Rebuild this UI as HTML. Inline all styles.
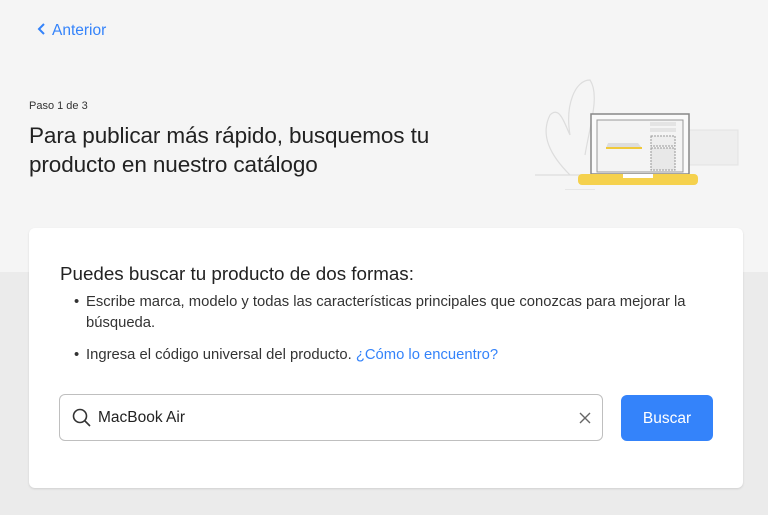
<!DOCTYPE html>
<html><head><meta charset="utf-8"><style>
*{margin:0;padding:0;box-sizing:border-box}
body{width:768px;height:515px;overflow:hidden;font-family:"Liberation Sans",sans-serif;background:#ebebeb;position:relative;color:#333}
.top{position:absolute;left:0;top:0;width:768px;height:272px;background:#f5f5f5}
.back{position:absolute;left:37px;top:22px;color:#3483fa;font-size:15.5px}
.step{position:absolute;left:29px;top:100px;font-size:11px;color:#333}
h1{position:absolute;left:29px;top:121px;font-size:22.5px;font-weight:normal;line-height:29px;color:#222;letter-spacing:-0.1px}
.card{position:absolute;left:29px;top:228px;width:714px;height:260px;background:#fff;border-radius:6px;box-shadow:0 1px 2px rgba(0,0,0,.12)}
h2{position:absolute;left:31px;top:35px;font-size:18.8px;font-weight:normal;color:#222}
ul{position:absolute;left:45px;top:64px;width:660px;font-size:14.8px;line-height:21px;color:#333;list-style:none}
li{position:relative;padding-left:12px}
li:before{content:"•";position:absolute;left:0}
a{color:#3483fa;text-decoration:none}
.input{position:absolute;left:30px;top:166px;width:544px;height:47px;border:1px solid #bfbfbf;border-radius:6px}
.input span{position:absolute;left:38px;top:14px;font-size:15.5px;color:#222}
.btn{position:absolute;left:592px;top:167px;width:92px;height:46px;background:#3483fa;border-radius:6px;color:#fff;font-size:15.5px;text-align:center;line-height:48px}
</style></head><body>
<div class="top"></div>
<div class="back"><svg width="10" height="14" style="vertical-align:-1px;margin-right:5px"><path d="M7 2L2 7l5 5" stroke="#3483fa" stroke-width="2" fill="none"/></svg>Anterior</div>
<div class="step">Paso 1 de 3</div>
<h1>Para publicar más rápido, busquemos tu<br>producto en nuestro catálogo</h1>
<svg style="position:absolute;left:530px;top:75px" width="220" height="115">
<g fill="none" stroke="#ddd" stroke-width="1.2"><path d="M40 100C20 80 10 60 20 40 30 30 35 50 40 60 35 30 45 5 60 5 70 20 60 50 55 80"/><path d="M5 100h60 M35 115h30"/></g>
<rect x="158" y="55" width="50" height="35" fill="#eee" stroke="#e3e3e3"/>
<rect x="61" y="39" width="98" height="60" fill="#fafafa" stroke="#888" stroke-width="1.5"/>
<rect x="67" y="45" width="86" height="52" fill="#f4f4f4" stroke="#999"/>
<path d="M78 68h30l4 5H76z" fill="#ddd"/><path d="M76 73h36" stroke="#f0c93a" stroke-width="2"/>
<rect x="120" y="47" width="26" height="4" fill="#e4e4e4"/><rect x="120" y="53" width="26" height="4" fill="#e4e4e4"/>
<rect x="121" y="61" width="24" height="10" fill="#eee" stroke="#999" stroke-dasharray="2 1"/>
<rect x="121" y="73" width="24" height="22" fill="#e8e8e8" stroke="#999" stroke-dasharray="2 1"/>
<rect x="48" y="99" width="120" height="11" rx="4" fill="#f5d14d"/>
<rect x="93" y="99" width="30" height="4" fill="#fff"/>
</svg>
<div class="card">
<h2>Puedes buscar tu producto de dos formas:</h2>
<ul><li>Escribe marca, modelo y todas las características principales que conozcas para mejorar la búsqueda.</li>
<li style="margin-top:11px">Ingresa el código universal del producto. <a>¿Cómo lo encuentro?</a></li></ul>
<div class="input"><svg style="position:absolute;left:12px;top:13px" width="20" height="20"><circle cx="8" cy="8" r="6.5" stroke="#333" stroke-width="1.6" fill="none"/><path d="M13 13l5 5" stroke="#333" stroke-width="1.6"/></svg><span>MacBook Air</span>
<svg style="position:absolute;right:11px;top:17px" width="12" height="12"><path d="M1 1l10 10M11 1L1 11" stroke="#666" stroke-width="1.4"/></svg></div>
<div class="btn">Buscar</div>
</div>
</body></html>
